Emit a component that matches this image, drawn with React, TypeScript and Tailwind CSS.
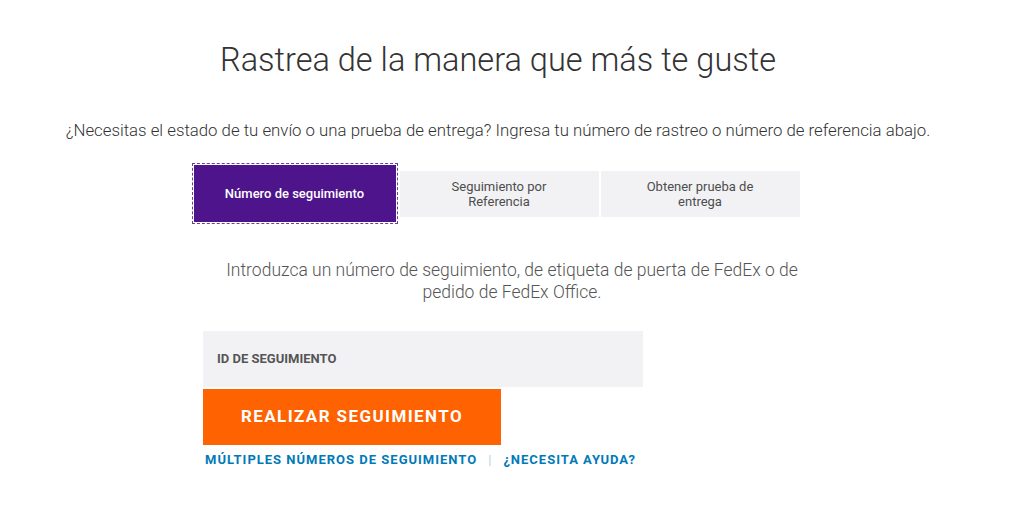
export default function App() {
    const tabs = [
        { id: 1, label: "Número de seguimiento", active: true },
        { id: 2, label: "Seguimiento por Referencia", active: false },
        { id: 3, label: "Obtener prueba de entrega", active: false },
    ];

    return (
        <div className="w-[1024px] h-[510px] bg-white font-['Roboto',sans-serif] pt-[37px]">
            {/* header + tabs */}
            <div className="mr-[28px] flex flex-col items-center">
                <h1 className="text-[32.5px] leading-[46px] font-light text-[#333]">
                    Rastrea de la manera que más te guste
                </h1>
                <p className="mt-[36px] text-[16.8px] leading-[22px] font-light text-[#333]">
                    ¿Necesitas el estado de tu envío o una prueba de entrega? Ingresa tu número de rastreo o número de referencia abajo.
                </p>
                <div className="mt-[22px] mr-[5px] flex items-center gap-[2px]">
                    {tabs.map((tab) =>
                        tab.active ? (
                            <div key={tab.id} className="p-px border border-dashed border-[#6a3fa0]">
                                <button className="w-[202px] h-[57px] bg-[#4d148c] text-white text-[13px] font-medium px-4">
                                    {tab.label}
                                </button>
                            </div>
                        ) : (
                            <button
                                key={tab.id}
                                className="w-[199px] h-[46px] bg-[#f2f2f5] text-[#4d4d4d] text-[13px] leading-[15px] px-[38px]"
                            >
                                {tab.label}
                            </button>
                        )
                    )}
                </div>
            </div>

            {/* tab panel */}
            <div className="mx-auto w-[620px] mt-[35px]">
                <p className="text-center text-[17.5px] leading-[22px] font-light text-[#555] px-[18px]">
                    Introduzca un número de seguimiento, de etiqueta de puerta de FedEx o de pedido de FedEx Office.
                </p>
                <div className="mt-[28px] ml-px w-[440px] h-[56px] bg-[#f2f2f5] flex items-center px-[14px]">
                    <span className="text-[13px] font-bold text-[#555]">ID DE SEGUIMIENTO</span>
                </div>
                <button className="mt-[2px] ml-px w-[298px] h-[56px] bg-[#ff6200] text-white text-[17px] font-bold tracking-[1.4px]">
                    REALIZAR SEGUIMIENTO
                </button>
                <div className="mt-[5px] ml-[3px] flex items-center text-[13px] font-bold tracking-[1px] text-[#007ab7]">
                    <a href="#">MÚLTIPLES NÚMEROS DE SEGUIMIENTO</a>
                    <span className="mx-[11px] font-normal text-[#b8cde0]">|</span>
                    <a href="#">¿NECESITA AYUDA?</a>
                </div>
            </div>
        </div>
    );
}
